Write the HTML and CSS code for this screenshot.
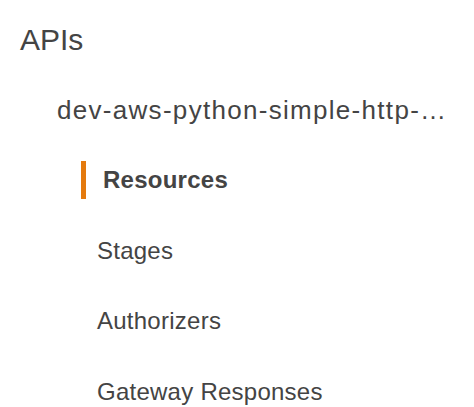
FILE: index.html
```html
<!DOCTYPE html>
<html lang="en">
<head>
  <meta charset="UTF-8">
  <meta name="viewport" content="width=device-width, initial-scale=1">
  <title>APIs</title>
  <link rel="stylesheet" href="styles.css">
</head>
<body>
  <nav class="sidebar">
    <div class="nav-title">APIs</div>
    <div class="api-name">dev-aws-python-simple-http-…</div>
    <ul class="sections">
      <li><a href="#" class="active">Resources</a></li>
      <li><a href="#">Stages</a></li>
      <li><a href="#">Authorizers</a></li>
      <li><a href="#">Gateway Responses</a></li>
    </ul>
  </nav>
</body>
</html>
```

FILE: styles.css
```css
* {
  box-sizing: border-box;
}

body {
  margin: 0;
  background: #fff;
  font-family: "Liberation Sans", Arial, sans-serif;
  color: #444;
}

.sidebar {
  padding-top: 5px;
}

.nav-title {
  height: 70px;
  line-height: 70px;
  padding-left: 20px;
  font-size: 30px;
}

.api-name {
  height: 70px;
  line-height: 70px;
  padding-left: 57px;
  font-size: 26px;
  letter-spacing: 1.3px;
  white-space: nowrap;
}

.sections {
  list-style: none;
  margin: 0;
  padding: 0 0 0 81px;
}

.sections li {
  height: 70.5px;
  display: flex;
  align-items: center;
}

.sections a {
  display: block;
  line-height: 38px;
  padding-left: 16px;
  font-size: 24px;
  letter-spacing: 0.25px;
  color: #444;
  text-decoration: none;
}

.sections a.active {
  border-left: 5px solid #e47a0e;
  padding-left: 17px;
  font-weight: bold;
}
```
